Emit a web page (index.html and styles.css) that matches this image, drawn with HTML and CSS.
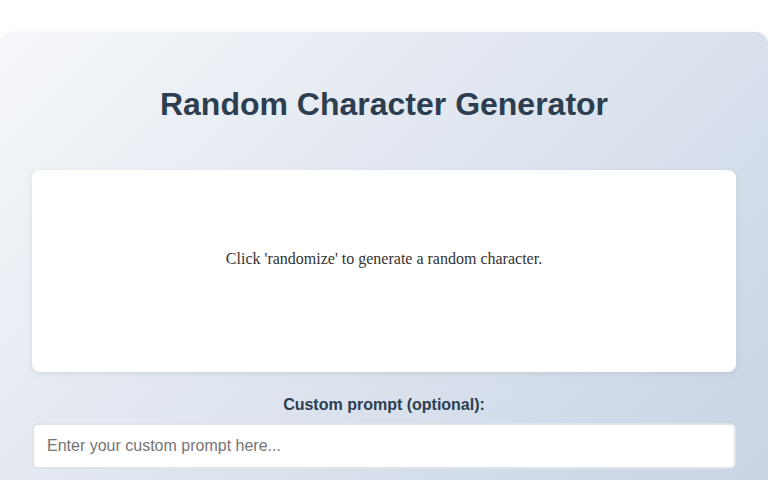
FILE: index.html
```html
<!DOCTYPE html>
<html lang="en">
<head>
<meta charset="utf-8">
<title>Random Character Generator</title>
<link rel="stylesheet" href="styles.css">
</head>
<body>
<main class="app">
  <h1 class="title">Random Character Generator</h1>
  <section class="card">
    <p class="placeholder-text">Click 'randomize' to generate a random character.</p>
  </section>
  <div class="prompt">
    <label class="prompt-label" for="prompt">Custom prompt (optional):</label>
    <input class="prompt-input" id="prompt" type="text" placeholder="Enter your custom prompt here...">
  </div>
</main>
</body>
</html>
```

FILE: styles.css
```css
html, body {
  margin: 0;
  padding: 0;
  background: #ffffff;
  height: 100%;
  overflow: hidden;
}

body {
  padding-top: 32px;
  font-family: "Liberation Sans", Arial, sans-serif;
}

.app {
  box-sizing: border-box;
  min-height: 600px;
  padding: 32px 32px;
  border-radius: 12px;
  background: linear-gradient(135deg, #f5f7fa 0%, #c3cfe2 100%);
  box-shadow: 0 2px 8px rgba(0, 0, 0, 0.06);
  display: flex;
  flex-direction: column;
}

.title {
  margin: 22px 0 47px;
  font-size: 32px;
  line-height: 37px;
  font-weight: 700;
  color: #2c3e50;
  text-align: center;
}

.card {
  box-sizing: border-box;
  height: 202px;
  background: #ffffff;
  border-radius: 8px;
  box-shadow: 0 2px 6px rgba(0, 0, 0, 0.08);
  padding: 80px 20px 0;
}

.placeholder-text {
  margin: 0;
  font-family: "Liberation Serif", "Times New Roman", serif;
  font-size: 16px;
  line-height: 18px;
  color: #333333;
  text-align: center;
}

.prompt {
  margin-top: 23px;
  display: flex;
  flex-direction: column;
  gap: 9px;
}

.prompt-label {
  font-size: 16px;
  line-height: 19px;
  font-weight: 700;
  color: #2c3e50;
  text-align: center;
}

.prompt-input {
  box-sizing: border-box;
  width: 100%;
  height: 46px;
  margin: 0;
  padding: 0 13px;
  border: 2px solid #dfe3ea;
  border-radius: 6px;
  background: #ffffff;
  font-family: "Liberation Sans", Arial, sans-serif;
  font-size: 16px;
  color: #333333;
  outline: none;
}

.prompt-input::placeholder {
  color: #757575;
}
```
